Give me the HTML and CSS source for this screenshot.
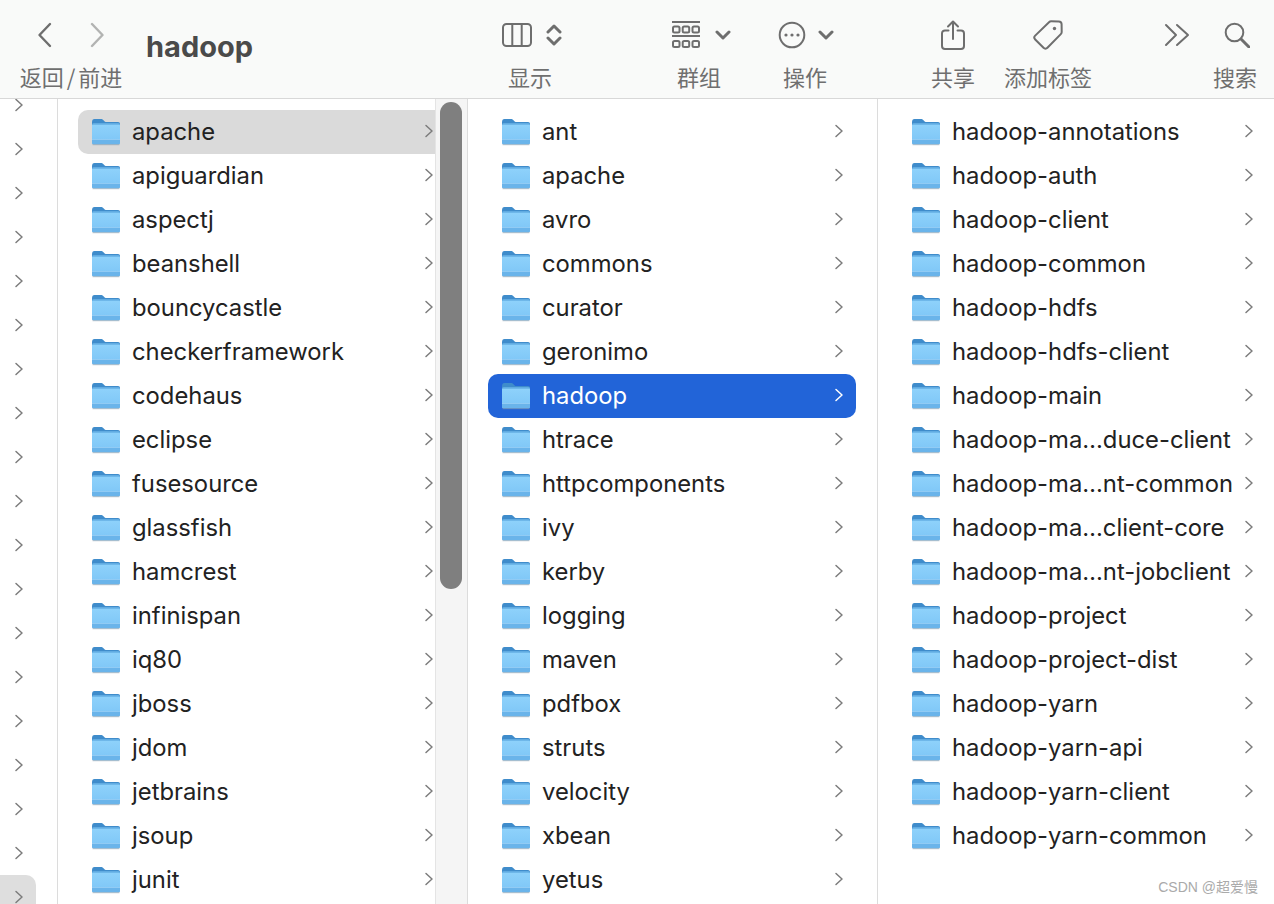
FILE: index.html
```html
<!DOCTYPE html>
<html lang="zh">
<head>
<meta charset="utf-8">
<title>hadoop</title>
<link rel="stylesheet" href="styles.css">
</head>
<body>
<svg class="defs" width="0" height="0" aria-hidden="true">
  <defs>
    <linearGradient id="fg" x1="0" y1="0" x2="0" y2="1">
      <stop offset="0" stop-color="#8fd2fb"/>
      <stop offset="1" stop-color="#7cc5f6"/>
    </linearGradient>
    <symbol id="folder" viewBox="0 0 30 28">
      <path d="M1 4.5C1 2 1.8 1 3.5 1h6.2c1.3 0 2 .4 2.8 1.2l1.2 1.2c.6.5 1 .7 1.9.7H27c1.400 0 2 .8 2 2.200V10H1z" fill="#3f8ccb"/>
      <rect x="1" y="5.600" width="28" height="20.600" rx="1.600" fill="url(#fg)"/>
      <rect x="1" y="5.600" width="28" height="1" fill="#5aa6de"/>
      <path d="M1 21h28v3.700c0 1-.6 1.600-1.600 1.600H2.600c-1 0-1.600-.6-1.600-1.600z" fill="#6ab4ea"/>
      <rect x="1" y="21" width="28" height=".7" fill="#a3d6f8"/>
      <rect x="1.500" y="26.200" width="27" height="1" fill="#8a9aa6" opacity=".6"/>
    </symbol>
    <symbol id="chev" viewBox="0 0 10 14">
      <path d="M2 1.500 8 7l-6 5.500" fill="none" stroke="currentColor" stroke-width="1.500" stroke-linecap="round" stroke-linejoin="round"/>
    </symbol>
  </defs>
</svg>

<header class="toolbar">
  <div class="tool tool-nav">
    <div class="nav-icons">
      <svg class="ico" width="16" height="26" viewBox="0 0 16 26"><path d="M13 2 2.500 13 13 24" class="st"/></svg>
      <svg class="ico ico-off" width="16" height="26" viewBox="0 0 16 26"><path d="M3 2l10.500 11L3 24" class="st"/></svg>
    </div>
    <span class="label">返回<span class="slash">/</span>前进</span>
  </div>
  <h1 class="title">hadoop</h1>
  <div class="tool tool-view">
    <div class="icons">
      <svg class="ico" width="30" height="26" viewBox="0 0 30 26"><rect x="1" y="2" width="28" height="22" rx="3.500" class="st-t"/><path d="M10.300 2v22M19.700 2v22" class="st-t"/></svg>
      <svg class="ico" width="16" height="26" viewBox="0 0 16 26"><path d="M2 10l6-6 6 6M2 16l6 6 6-6" class="st-b"/></svg>
    </div>
    <span class="label">显示</span>
  </div>
  <div class="tool tool-group">
    <div class="icons">
      <svg class="ico" width="28" height="28" viewBox="0 0 28 28"><path d="M0 1h28M0 15h28" class="st-m"/><g class="st-t"><rect x="1" y="5.500" width="6.500" height="6" rx="1.500"/><rect x="10.700" y="5.500" width="6.500" height="6" rx="1.500"/><rect x="20.500" y="5.500" width="6.500" height="6" rx="1.500"/><rect x="1" y="20" width="6.500" height="6" rx="1.500"/><rect x="10.700" y="20" width="6.500" height="6" rx="1.500"/><rect x="20.500" y="20" width="6.500" height="6" rx="1.500"/></g></svg>
      <svg class="ico" width="16" height="12" viewBox="0 0 16 12"><path d="M2 3l6 6 6-6" class="st-b"/></svg>
    </div>
    <span class="label">群组</span>
  </div>
  <div class="tool tool-action">
    <div class="icons">
      <svg class="ico" width="28" height="28" viewBox="0 0 28 28"><circle cx="14" cy="14" r="12.300" class="st-t"/><circle cx="8" cy="14" r="1.600" class="dot"/><circle cx="14" cy="14" r="1.600" class="dot"/><circle cx="20" cy="14" r="1.600" class="dot"/></svg>
      <svg class="ico" width="16" height="12" viewBox="0 0 16 12"><path d="M2 3l6 6 6-6" class="st-b"/></svg>
    </div>
    <span class="label">操作</span>
  </div>
  <div class="tool tool-share">
    <div class="icons">
      <svg class="ico" width="24" height="30" viewBox="0 0 24 30"><path d="M7.500 10.500H4c-1.800 0-3 1.200-3 3V26c0 1.800 1.200 3 3 3h16c1.800 0 3-1.200 3-3V13.500c0-1.800-1.200-3-3-3h-3.500M12 19V2M7 6.500 12 1.500l5 5" class="st-t"/></svg>
    </div>
    <span class="label">共享</span>
  </div>
  <div class="tool tool-tag">
    <div class="icons">
      <svg class="ico" width="30" height="30" viewBox="0 0 30 30"><path d="M2.200 15.600 16 2.200c.6-.6 1.300-.9 2.100-.9l7.700.1c1.600 0 2.800 1.200 2.800 2.800l.1 7.700c0 .8-.3 1.600-.9 2.200L14.400 27.800c-1.100 1.100-2.800 1.100-3.900 0l-8.300-8.300c-1.100-1.100-1.100-2.800 0-3.900z" class="st-t"/><circle cx="21.500" cy="8.500" r="1.700" class="dot"/></svg>
    </div>
    <span class="label">添加标签</span>
  </div>
  <div class="tool tool-more">
    <div class="icons">
      <svg class="ico" width="26" height="24" viewBox="0 0 26 24"><path d="M2 2l10 10L2 22M13 2l11 10-11 10" class="st-m"/></svg>
    </div>
  </div>
  <div class="tool tool-search">
    <div class="icons">
      <svg class="ico" width="26" height="26" viewBox="0 0 26 26"><circle cx="10.500" cy="10.500" r="8.800" class="st-t"/><path d="M17 17l8 8" class="st-b"/></svg>
    </div>
    <span class="label">搜索</span>
  </div>
</header>

<main class="browser">
  <section class="col col-side">
    <ul class="side-list">
      <li class="side-row"><svg class="chev"><use href="#chev"/></svg></li>
      <li class="side-row"><svg class="chev"><use href="#chev"/></svg></li>
      <li class="side-row"><svg class="chev"><use href="#chev"/></svg></li>
      <li class="side-row"><svg class="chev"><use href="#chev"/></svg></li>
      <li class="side-row"><svg class="chev"><use href="#chev"/></svg></li>
      <li class="side-row"><svg class="chev"><use href="#chev"/></svg></li>
      <li class="side-row"><svg class="chev"><use href="#chev"/></svg></li>
      <li class="side-row"><svg class="chev"><use href="#chev"/></svg></li>
      <li class="side-row"><svg class="chev"><use href="#chev"/></svg></li>
      <li class="side-row"><svg class="chev"><use href="#chev"/></svg></li>
      <li class="side-row"><svg class="chev"><use href="#chev"/></svg></li>
      <li class="side-row"><svg class="chev"><use href="#chev"/></svg></li>
      <li class="side-row"><svg class="chev"><use href="#chev"/></svg></li>
      <li class="side-row"><svg class="chev"><use href="#chev"/></svg></li>
      <li class="side-row"><svg class="chev"><use href="#chev"/></svg></li>
      <li class="side-row"><svg class="chev"><use href="#chev"/></svg></li>
      <li class="side-row"><svg class="chev"><use href="#chev"/></svg></li>
      <li class="side-row"><svg class="chev"><use href="#chev"/></svg></li>
      <li class="side-row side-sel"><svg class="chev"><use href="#chev"/></svg></li>
    </ul>
  </section>

  <section class="col col-a">
    <ul class="list">
      <li class="row row-inactive"><svg class="folder"><use href="#folder"/></svg><span class="name">apache</span><svg class="chev"><use href="#chev"/></svg></li>
      <li class="row"><svg class="folder"><use href="#folder"/></svg><span class="name">apiguardian</span><svg class="chev"><use href="#chev"/></svg></li>
      <li class="row"><svg class="folder"><use href="#folder"/></svg><span class="name">aspectj</span><svg class="chev"><use href="#chev"/></svg></li>
      <li class="row"><svg class="folder"><use href="#folder"/></svg><span class="name">beanshell</span><svg class="chev"><use href="#chev"/></svg></li>
      <li class="row"><svg class="folder"><use href="#folder"/></svg><span class="name">bouncycastle</span><svg class="chev"><use href="#chev"/></svg></li>
      <li class="row"><svg class="folder"><use href="#folder"/></svg><span class="name">checkerframework</span><svg class="chev"><use href="#chev"/></svg></li>
      <li class="row"><svg class="folder"><use href="#folder"/></svg><span class="name">codehaus</span><svg class="chev"><use href="#chev"/></svg></li>
      <li class="row"><svg class="folder"><use href="#folder"/></svg><span class="name">eclipse</span><svg class="chev"><use href="#chev"/></svg></li>
      <li class="row"><svg class="folder"><use href="#folder"/></svg><span class="name">fusesource</span><svg class="chev"><use href="#chev"/></svg></li>
      <li class="row"><svg class="folder"><use href="#folder"/></svg><span class="name">glassfish</span><svg class="chev"><use href="#chev"/></svg></li>
      <li class="row"><svg class="folder"><use href="#folder"/></svg><span class="name">hamcrest</span><svg class="chev"><use href="#chev"/></svg></li>
      <li class="row"><svg class="folder"><use href="#folder"/></svg><span class="name">infinispan</span><svg class="chev"><use href="#chev"/></svg></li>
      <li class="row"><svg class="folder"><use href="#folder"/></svg><span class="name">iq80</span><svg class="chev"><use href="#chev"/></svg></li>
      <li class="row"><svg class="folder"><use href="#folder"/></svg><span class="name">jboss</span><svg class="chev"><use href="#chev"/></svg></li>
      <li class="row"><svg class="folder"><use href="#folder"/></svg><span class="name">jdom</span><svg class="chev"><use href="#chev"/></svg></li>
      <li class="row"><svg class="folder"><use href="#folder"/></svg><span class="name">jetbrains</span><svg class="chev"><use href="#chev"/></svg></li>
      <li class="row"><svg class="folder"><use href="#folder"/></svg><span class="name">jsoup</span><svg class="chev"><use href="#chev"/></svg></li>
      <li class="row"><svg class="folder"><use href="#folder"/></svg><span class="name">junit</span><svg class="chev"><use href="#chev"/></svg></li>
    </ul>
    <div class="track"><div class="thumb"></div></div>
  </section>

  <section class="col col-b">
    <ul class="list">
      <li class="row"><svg class="folder"><use href="#folder"/></svg><span class="name">ant</span><svg class="chev"><use href="#chev"/></svg></li>
      <li class="row"><svg class="folder"><use href="#folder"/></svg><span class="name">apache</span><svg class="chev"><use href="#chev"/></svg></li>
      <li class="row"><svg class="folder"><use href="#folder"/></svg><span class="name">avro</span><svg class="chev"><use href="#chev"/></svg></li>
      <li class="row"><svg class="folder"><use href="#folder"/></svg><span class="name">commons</span><svg class="chev"><use href="#chev"/></svg></li>
      <li class="row"><svg class="folder"><use href="#folder"/></svg><span class="name">curator</span><svg class="chev"><use href="#chev"/></svg></li>
      <li class="row"><svg class="folder"><use href="#folder"/></svg><span class="name">geronimo</span><svg class="chev"><use href="#chev"/></svg></li>
      <li class="row row-active"><svg class="folder"><use href="#folder"/></svg><span class="name">hadoop</span><svg class="chev"><use href="#chev"/></svg></li>
      <li class="row"><svg class="folder"><use href="#folder"/></svg><span class="name">htrace</span><svg class="chev"><use href="#chev"/></svg></li>
      <li class="row"><svg class="folder"><use href="#folder"/></svg><span class="name">httpcomponents</span><svg class="chev"><use href="#chev"/></svg></li>
      <li class="row"><svg class="folder"><use href="#folder"/></svg><span class="name">ivy</span><svg class="chev"><use href="#chev"/></svg></li>
      <li class="row"><svg class="folder"><use href="#folder"/></svg><span class="name">kerby</span><svg class="chev"><use href="#chev"/></svg></li>
      <li class="row"><svg class="folder"><use href="#folder"/></svg><span class="name">logging</span><svg class="chev"><use href="#chev"/></svg></li>
      <li class="row"><svg class="folder"><use href="#folder"/></svg><span class="name">maven</span><svg class="chev"><use href="#chev"/></svg></li>
      <li class="row"><svg class="folder"><use href="#folder"/></svg><span class="name">pdfbox</span><svg class="chev"><use href="#chev"/></svg></li>
      <li class="row"><svg class="folder"><use href="#folder"/></svg><span class="name">struts</span><svg class="chev"><use href="#chev"/></svg></li>
      <li class="row"><svg class="folder"><use href="#folder"/></svg><span class="name">velocity</span><svg class="chev"><use href="#chev"/></svg></li>
      <li class="row"><svg class="folder"><use href="#folder"/></svg><span class="name">xbean</span><svg class="chev"><use href="#chev"/></svg></li>
      <li class="row"><svg class="folder"><use href="#folder"/></svg><span class="name">yetus</span><svg class="chev"><use href="#chev"/></svg></li>
    </ul>
  </section>

  <section class="col col-c">
    <ul class="list">
      <li class="row"><svg class="folder"><use href="#folder"/></svg><span class="name">hadoop-annotations</span><svg class="chev"><use href="#chev"/></svg></li>
      <li class="row"><svg class="folder"><use href="#folder"/></svg><span class="name">hadoop-auth</span><svg class="chev"><use href="#chev"/></svg></li>
      <li class="row"><svg class="folder"><use href="#folder"/></svg><span class="name">hadoop-client</span><svg class="chev"><use href="#chev"/></svg></li>
      <li class="row"><svg class="folder"><use href="#folder"/></svg><span class="name">hadoop-common</span><svg class="chev"><use href="#chev"/></svg></li>
      <li class="row"><svg class="folder"><use href="#folder"/></svg><span class="name">hadoop-hdfs</span><svg class="chev"><use href="#chev"/></svg></li>
      <li class="row"><svg class="folder"><use href="#folder"/></svg><span class="name">hadoop-hdfs-client</span><svg class="chev"><use href="#chev"/></svg></li>
      <li class="row"><svg class="folder"><use href="#folder"/></svg><span class="name">hadoop-main</span><svg class="chev"><use href="#chev"/></svg></li>
      <li class="row"><svg class="folder"><use href="#folder"/></svg><span class="name">hadoop-ma…duce-client</span><svg class="chev"><use href="#chev"/></svg></li>
      <li class="row"><svg class="folder"><use href="#folder"/></svg><span class="name">hadoop-ma…nt-common</span><svg class="chev"><use href="#chev"/></svg></li>
      <li class="row"><svg class="folder"><use href="#folder"/></svg><span class="name">hadoop-ma…client-core</span><svg class="chev"><use href="#chev"/></svg></li>
      <li class="row"><svg class="folder"><use href="#folder"/></svg><span class="name">hadoop-ma…nt-jobclient</span><svg class="chev"><use href="#chev"/></svg></li>
      <li class="row"><svg class="folder"><use href="#folder"/></svg><span class="name">hadoop-project</span><svg class="chev"><use href="#chev"/></svg></li>
      <li class="row"><svg class="folder"><use href="#folder"/></svg><span class="name">hadoop-project-dist</span><svg class="chev"><use href="#chev"/></svg></li>
      <li class="row"><svg class="folder"><use href="#folder"/></svg><span class="name">hadoop-yarn</span><svg class="chev"><use href="#chev"/></svg></li>
      <li class="row"><svg class="folder"><use href="#folder"/></svg><span class="name">hadoop-yarn-api</span><svg class="chev"><use href="#chev"/></svg></li>
      <li class="row"><svg class="folder"><use href="#folder"/></svg><span class="name">hadoop-yarn-client</span><svg class="chev"><use href="#chev"/></svg></li>
      <li class="row"><svg class="folder"><use href="#folder"/></svg><span class="name">hadoop-yarn-common</span><svg class="chev"><use href="#chev"/></svg></li>
    </ul>
    <span class="watermark">CSDN @超爱慢</span>
  </section>
</main>
</body>
</html>
```
FILE: styles.css
```css
* { box-sizing: border-box; }
html, body { margin: 0; height: 100%; }
body {
  width: 1274px;
  height: 904px;
  overflow: hidden;
  background: #fff;
  font-family: "Inter", "Noto Sans CJK SC", sans-serif;
  color: #222;
}
.defs { position: absolute; }
ul { list-style: none; margin: 0; padding: 0; }

/* toolbar */
.toolbar {
  display: flex;
  align-items: flex-start;
  height: 99px;
  background: #f9faf9;
  border-bottom: 1px solid #d8d8d8;
}
.tool { display: flex; flex-direction: column; align-items: center; flex: none; height: 98px; }
.icons, .nav-icons { height: 40px; margin-top: 15px; display: flex; align-items: center; }
.label {
  margin-top: 6px;
  font-size: 22px;
  line-height: 30px;
  color: #6f6f6f;
  white-space: nowrap;
  font-family: "Noto Sans CJK SC", sans-serif;
}
.slash { margin: 0 3px; }
.ico { display: block; flex: none; }
.st, .st-t, .st-b, .st-m { fill: none; stroke: #6e6e6e; stroke-linecap: round; stroke-linejoin: round; }
.st { stroke-width: 2.4; }
.st-t { stroke-width: 2; }
.st-b { stroke-width: 3; }
.st-m { stroke-width: 2; }
.dot { fill: #6e6e6e; }
.ico-off { opacity: .5; }

.tool-nav { width: 102px; margin-left: 20px; }
.nav-icons { gap: 36px; }
.title {
  margin: 29px 0 0 24px;
  width: 340px;
  flex: none;
  font-size: 29px;
  line-height: 36px;
  font-weight: 700;
  color: #4a4a4a;
}
.tool-view { width: 68px; margin-left: 10px; }
.tool-view .icons { gap: 14px; padding-left: 4px; }
.tool-group { width: 68px; margin-left: 101px; }
.tool-group .icons { gap: 15px; padding-left: 4px; }
.tool-action { width: 68px; margin-left: 38px; }
.tool-action .icons { gap: 12px; padding-left: 2px; }
.tool-share { width: 44px; margin-left: 92px; }
.tool-tag { width: 88px; margin-left: 29px; }
.tool-more { width: 26px; margin-left: 72px; }
.tool-search { width: 44px; margin-left: 23px; }
.tool-search .icons { padding-left: 4px; }

/* browser */
.browser { display: flex; height: 805px; overflow: hidden; }
.col { position: relative; flex: none; height: 805px; overflow: hidden; border-right: 1px solid #dcdcdc; }
.col-side { width: 58px; }
.col-a, .col-b { width: 410px; }
.col-c { width: 396px; border-right: 0; }

.side-list { margin-top: -16px; }
.side-row { height: 44px; display: flex; align-items: center; padding-left: 14px; }
.side-sel { width: 36px; background: #dedede; border-radius: 0 10px 0 0; }

.list { padding: 11px 0 0 20px; }
.row {
  display: flex;
  align-items: center;
  width: 368px;
  height: 44px;
  padding-left: 13px;
  border-radius: 10px;
  font-size: 23.800px;
  color: #222;
}
.folder { width: 30px; height: 28px; flex: none; }
.name { margin: 0 0 2px 11px; flex: 1; white-space: nowrap; }
.chev { width: 10px; height: 14px; flex: none; color: #7c7c7c; }
.row .chev { margin: 0 12px 2px 0; }
.row-inactive { background: #dadada; }
.row-active { background: #2264d8; color: #fff; }
.row-active .chev { color: #fff; }

.track {
  position: absolute;
  left: 377px;
  top: 0;
  bottom: 0;
  width: 32px;
  background: #f5f5f5;
  border-left: 1px solid #e4e4e4;
}
.thumb {
  position: absolute;
  left: 4px;
  top: 3px;
  width: 22px;
  height: 487px;
  border-radius: 11px;
  background: #7f7f7f;
}
.watermark {
  position: absolute;
  right: 16px;
  bottom: 8px;
  font-size: 14px;
  line-height: 18px;
  color: #aaa;
  font-family: "Liberation Sans", "Noto Sans CJK SC", sans-serif;
}
```
